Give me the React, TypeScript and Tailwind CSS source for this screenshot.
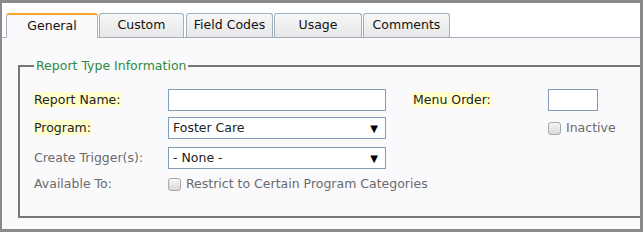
import type { ReactNode } from 'react';

const FONT = { fontFamily: '"DejaVu Sans", Verdana, sans-serif' };

const TABS = [
  { label: 'General', cls: 'ml-[2px] w-[92px]' },
  { label: 'Custom', cls: 'ml-px w-[85px]' },
  { label: 'Field Codes', cls: 'ml-[2px] w-[87px]' },
  { label: 'Usage', cls: 'ml-px w-[88px]' },
  { label: 'Comments', cls: 'ml-px w-[87px]' },
];

function Tab({ label, active, cls }: { label: string; active: boolean; cls: string }) {
  // Active tab sits over the panel's top line so it reads as joined to it.
  const look = active
    ? 'bg-[#fafafd] border-x border-[#a9b6c1] border-t-2 border-t-[#f5a52a] -mb-px h-[25px] z-10'
    : 'bg-gradient-to-b from-[#f7f7f7] to-[#e7e7e7] border border-b-0 border-[#9fb0be] h-[24px]';
  return (
    <div className={`${cls} ${look} relative rounded-t-[3px] flex items-center justify-center text-[12.5px] text-[#111]`}>
      {label}
    </div>
  );
}

function Label({ children, required }: { children: ReactNode; required?: boolean }) {
  return required ? (
    <span className="bg-[#ffffcc] text-[#222] px-px leading-[15px]">{children}</span>
  ) : (
    <span className="text-[#6a6a6a] px-px leading-[15px]">{children}</span>
  );
}

function Box() {
  return (
    <span className="inline-block w-[13px] h-[13px] rounded-[3px] border border-[#a6a6a6] bg-gradient-to-b from-[#f6f6f6] to-[#dadada]" />
  );
}

function Select({ value }: { value: string }) {
  return (
    <div className="w-[218px] h-[22px] border border-[#7f9db9] bg-white flex items-center justify-between pl-[4px] pr-[7px] text-[12.5px] text-[#222]">
      <span>{value}</span>
      <span className="text-[10px] text-black">▼</span>
    </div>
  );
}

export default function App() {
  return (
    <div
      style={FONT}
      className="w-[643px] h-[232px] border-[3px] border-l-2 border-[#8a8a8a] bg-white flex flex-col overflow-hidden"
    >
      <div className="flex items-end pt-[10px] pl-[2px]">
        {TABS.map((t, i) => (
          <Tab key={t.label} label={t.label} active={i === 0} cls={t.cls} />
        ))}
      </div>

      <div className="flex-1 bg-[#fafafd] border-t border-[#a3afb8] pl-[16px]">
        <fieldset className="mt-[20px] h-[160px] border-2 border-[#777] border-r-0 text-[12.5px]">
          <legend className="ml-[14px] px-[2px] leading-[16px] text-[12.5px] text-[#2f8a3c]">
            Report Type Information
          </legend>

          <div className="pl-[13px] pt-[15px] flex flex-col">
            <div className="flex items-center h-[22px]">
              <div className="w-[135px]">
                <Label required>Report Name:</Label>
              </div>
              <div className="w-[218px] h-[22px] border border-[#7f9db9] bg-white" />
              <div className="ml-[26px] w-[136px]">
                <Label required>Menu Order:</Label>
              </div>
              <div className="w-[50px] h-[22px] border border-[#7f9db9] bg-white" />
            </div>

            <div className="flex items-center h-[22px] mt-[6px]">
              <div className="w-[135px]">
                <Label required>Program:</Label>
              </div>
              <Select value="Foster Care" />
              <div className="ml-[162px] flex items-center gap-[5px]">
                <Box />
                <span className="text-[#6a6a6a]">Inactive</span>
              </div>
            </div>

            <div className="flex items-center h-[22px] mt-[8px]">
              <div className="w-[135px]">
                <Label>Create Trigger(s):</Label>
              </div>
              <Select value="- None -" />
            </div>

            <div className="flex items-center h-[15px] mt-[8px]">
              <div className="w-[135px]">
                <Label>Available To:</Label>
              </div>
              <div className="flex items-center gap-[5px]">
                <Box />
                <span className="text-[#6a6a6a]">Restrict to Certain Program Categories</span>
              </div>
            </div>
          </div>
        </fieldset>
      </div>
    </div>
  );
}
